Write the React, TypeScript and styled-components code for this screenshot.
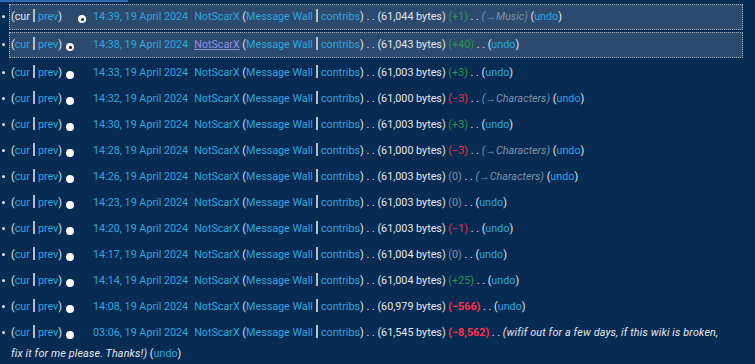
import React, {FC} from 'react';
import styled, {createGlobalStyle} from 'styled-components';

const colors = {
    page: '#082b54',
    selected: '#2c4a6e',
    dots: '#a3b0bf',
    text: '#e4e8ee',
    link: '#2fa6dc',
    visited: '#8f92e3',
    muted: '#7f92aa',
    green: '#2f9150',
    red: '#e2364c',
    strongRed: '#ff3049',
};

const GlobalStyle = createGlobalStyle`
    html, body {
        margin: 0;
        padding: 0;
        background: ${colors.page};
        overflow: hidden;
    }
    body {
        font-family: Roboto, "Liberation Sans", sans-serif;
        font-size: 10.75px;
        color: ${colors.text};
    }
`;

const Page = styled.div`
    width: 755px;
    height: 364px;
    padding-right: 12px;
    box-sizing: border-box;
`;

const TopEdge = styled.div`
    width: 128px;
    height: 2px;
    background: #2d6cb3;
    margin-bottom: 2px;
`;

const List = styled.ul`
    list-style: none;
    margin: 0;
    padding: 0;
`;

const Row = styled.li<{ $selected?: boolean }>`
    display: flex;
    align-items: flex-start;
    margin-bottom: ${p => p.$selected ? '2px' : '0'};
`;

const Bullet = styled.span`
    flex: 0 0 9px;
    height: 24px;
    display: flex;
    align-items: center;
    justify-content: flex-start;
    padding-left: 2px;
    box-sizing: border-box;
    &::before {
        content: '';
        width: 3px;
        height: 3px;
        border-radius: 50%;
        background: ${colors.text};
    }
`;

const Entry = styled.div<{ $selected?: boolean }>`
    flex: 1;
    line-height: 21px;
    padding: 1px 22px 2px 1px;
    border: 1px dotted ${p => p.$selected ? colors.dots : 'transparent'};
    background: ${p => p.$selected ? colors.selected : 'transparent'};
`;

const Link = styled.a<{ $visited?: boolean }>`
    color: ${p => p.$visited ? colors.visited : colors.link};
    text-decoration: ${p => p.$visited ? 'underline' : 'none'};
`;

const Sep = styled.span`
    display: inline-block;
    width: 2px;
    height: 13px;
    background: #b5bfcc;
    margin: 0 3px;
    vertical-align: -2px;
`;

const Radio = styled.span<{ $checked?: boolean; $hidden?: boolean }>`
    display: inline-block;
    width: 8px;
    height: 8px;
    border-radius: 50%;
    background: #ffffff;
    margin-left: 4px;
    vertical-align: -3px;
    visibility: ${p => p.$hidden ? 'hidden' : 'visible'};
    position: relative;
    &::after {
        content: '';
        display: ${p => p.$checked ? 'block' : 'none'};
        position: absolute;
        left: 2.5px;
        top: 2.5px;
        width: 3px;
        height: 3px;
        border-radius: 50%;
        background: #111;
    }
`;

const Date = styled(Link)`
    margin-left: 7px;
    margin-right: 6px;
`;

const Diff = styled.span<{ $tone: 'green' | 'red' | 'strong' | 'zero' }>`
    color: ${p => p.$tone === 'green' ? colors.green
        : p.$tone === 'red' ? colors.red
        : p.$tone === 'strong' ? colors.strongRed : colors.muted};
    font-weight: ${p => p.$tone === 'strong' ? 700 : 400};
`;

const AutoComment = styled.span`
    color: ${colors.muted};
    font-style: italic;
`;

const Comment = styled.span`
    font-style: italic;
    letter-spacing: 0.15px;
`;

type Rev = {
    date: string;
    bytes: string;
    diff: string;
    tone: 'green' | 'red' | 'strong' | 'zero';
    section?: string;
    comment?: string;
};

const revisions: Rev[] = [
    {date: '14:39, 19 April 2024', bytes: '61,044', diff: '+1', tone: 'green', section: 'Music'},
    {date: '14:38, 19 April 2024', bytes: '61,043', diff: '+40', tone: 'green'},
    {date: '14:33, 19 April 2024', bytes: '61,003', diff: '+3', tone: 'green'},
    {date: '14:32, 19 April 2024', bytes: '61,000', diff: '\u22123', tone: 'red', section: 'Characters'},
    {date: '14:30, 19 April 2024', bytes: '61,003', diff: '+3', tone: 'green'},
    {date: '14:28, 19 April 2024', bytes: '61,000', diff: '\u22123', tone: 'red', section: 'Characters'},
    {date: '14:26, 19 April 2024', bytes: '61,003', diff: '0', tone: 'zero', section: 'Characters'},
    {date: '14:23, 19 April 2024', bytes: '61,003', diff: '0', tone: 'zero'},
    {date: '14:20, 19 April 2024', bytes: '61,003', diff: '\u22121', tone: 'red'},
    {date: '14:17, 19 April 2024', bytes: '61,004', diff: '0', tone: 'zero'},
    {date: '14:14, 19 April 2024', bytes: '61,004', diff: '+25', tone: 'green'},
    {date: '14:08, 19 April 2024', bytes: '60,979', diff: '\u2212566', tone: 'strong'},
    {date: '03:06, 19 April 2024', bytes: '61,545', diff: '\u22128,562', tone: 'strong',
        comment: '(wifif out for a few days, if this wiki is broken, fix it for me please. Thanks!)'},
];

const App: FC = () => {
    return (
        <Page>
            <GlobalStyle/>
            <TopEdge/>
            <List>
                {revisions.map((rev, index) => {
                    const selected = index < 2;
                    return (
                        <Row key={index} $selected={selected}>
                            <Bullet/>
                            <Entry $selected={selected}>
                                (
                                {index === 0 ? 'cur' : <Link>cur</Link>}
                                <Sep/>
                                <Link>prev</Link>)
                                <Radio $hidden={index === 0} $checked={index === 1}/>
                                <Radio $hidden={index !== 0} $checked={index === 0}/>
                                <Date>{rev.date}</Date>
                                <Link $visited={index === 1}>NotScarX</Link>{' '}
                                (<Link>Message Wall</Link>
                                <Sep/>
                                <Link>contribs</Link>)
                                {' . . '}({rev.bytes} bytes){' '}
                                <Diff $tone={rev.tone}>({rev.diff})</Diff>
                                {' . . '}
                                {rev.section && (
                                    <><AutoComment>({'\u2192'}{rev.section})</AutoComment>{' '}</>
                                )}
                                {rev.comment && <><Comment>{rev.comment}</Comment>{' '}</>}
                                (<Link>undo</Link>)
                            </Entry>
                        </Row>
                    );
                })}
            </List>
        </Page>
    );
};

export default App;
